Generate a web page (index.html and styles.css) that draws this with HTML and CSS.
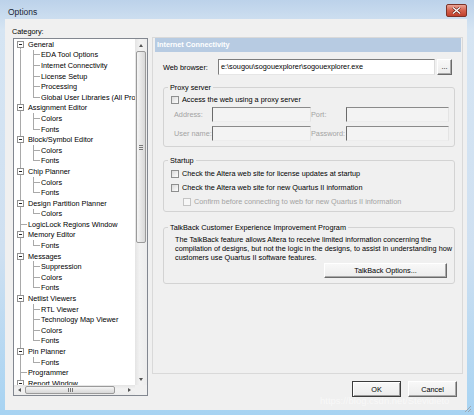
FILE: index.html
```html
<!DOCTYPE html>
<html lang="en">
<head>
  <meta charset="UTF-8">
  <title>Options</title>
  <link rel="stylesheet" href="styles.css">
</head>
<body>

  <div class="window">
    <div class="titlebar">
      <span class="title">Options</span>
      <span class="close">
        <svg width="9" height="7" viewBox="0 0 9 7"><path d="M1 0.5 L8 6.5 M8 0.5 L1 6.5" stroke="#5a1a10" stroke-width="2.4"/><path d="M1 0.5 L8 6.5 M8 0.5 L1 6.5" stroke="#fff" stroke-width="1.3"/></svg>
      </span>
    </div>

    <div class="client">
      <div class="left">
        <div class="cat-label">Category:</div>
        <div class="tree">
          <div class="tree-items">
            <div class="node root first"><span class="box"></span>General</div>
            <div class="node leaf">EDA Tool Options</div>
            <div class="node leaf">Internet Connectivity</div>
            <div class="node leaf">License Setup</div>
            <div class="node leaf">Processing</div>
            <div class="node leaf last">Global User Libraries (All Projects)</div>
            <div class="node root"><span class="box"></span>Assignment Editor</div>
            <div class="node leaf">Colors</div>
            <div class="node leaf last">Fonts</div>
            <div class="node root"><span class="box"></span>Block/Symbol Editor</div>
            <div class="node leaf">Colors</div>
            <div class="node leaf last">Fonts</div>
            <div class="node root"><span class="box"></span>Chip Planner</div>
            <div class="node leaf">Colors</div>
            <div class="node leaf last">Fonts</div>
            <div class="node root"><span class="box"></span>Design Partition Planner</div>
            <div class="node leaf last">Colors</div>
            <div class="node single">LogicLock Regions Window</div>
            <div class="node root"><span class="box"></span>Memory Editor</div>
            <div class="node leaf last">Fonts</div>
            <div class="node root"><span class="box"></span>Messages</div>
            <div class="node leaf">Suppression</div>
            <div class="node leaf">Colors</div>
            <div class="node leaf last">Fonts</div>
            <div class="node root"><span class="box"></span>Netlist Viewers</div>
            <div class="node leaf">RTL Viewer</div>
            <div class="node leaf">Technology Map Viewer</div>
            <div class="node leaf">Colors</div>
            <div class="node leaf last">Fonts</div>
            <div class="node root"><span class="box"></span>Pin Planner</div>
            <div class="node leaf last">Fonts</div>
            <div class="node single">Programmer</div>
            <div class="node root"><span class="box"></span>Report Window</div>
          </div>
          <div class="vscroll">
            <span class="arr"><i class="tri up"></i></span>
            <span class="thumb"><i class="grip"></i></span>
            <span class="track"></span>
            <span class="arr"><i class="tri down"></i></span>
          </div>
          <div class="hscroll">
            <span class="arr"><i class="tri lt"></i></span>
            <span class="thumb"><i class="grip"></i></span>
            <span class="track"></span>
            <span class="arr"><i class="tri rt"></i></span>
          </div>
          <div class="corner"></div>
        </div>
      </div>

      <div class="right">
        <div class="panel">
          <div class="panel-head">Internet Connectivity</div>
          <div class="panel-body">
            <div class="web-row">
              <span class="web-label">Web browser:</span>
              <span class="field">e:\sougou\sogouexplorer\sogouexplorer.exe</span>
              <button class="btn dots">...</button>
            </div>

            <fieldset class="group proxy">
              <legend>Proxy server</legend>
              <label class="check"><span class="cb"></span>Access the web using a proxy server</label>
              <div class="proxy-grid">
                <span class="off-text">Address:</span>
                <span class="field off"></span>
                <span class="off-text">Port:</span>
                <span class="field off"></span>
                <span class="off-text">User name:</span>
                <span class="field off"></span>
                <span class="off-text">Password:</span>
                <span class="field off"></span>
              </div>
            </fieldset>

            <fieldset class="group startup">
              <legend>Startup</legend>
              <label class="check"><span class="cb"></span>Check the Altera web site for license updates at startup</label>
              <label class="check"><span class="cb"></span>Check the Altera web site for new Quartus II information</label>
              <label class="check sub off-text"><span class="cb dim"></span>Confirm before connecting to web for new Quartus II information</label>
            </fieldset>

            <fieldset class="group talkback">
              <legend>TalkBack Customer Experience Improvement Program</legend>
              <p class="talk-text">The TalkBack feature allows Altera to receive limited information concerning the<br>compilation of designs, but not the logic in the designs, to assist in understanding how<br>customers use Quartus II software features.</p>
              <button class="btn talk-btn">TalkBack Options...</button>
            </fieldset>
          </div>
        </div>

        <div class="actions">
          <button class="btn default">OK</button>
          <button class="btn">Cancel</button>
        </div>
      </div>
    </div>

    <span class="watermark">https://blog.csdn.net/Stevidieto</span>
    <svg class="grip-corner" width="8" height="8" viewBox="0 0 8 8">
      <path d="M7 1 L1 7 M7 4 L4 7 M7 6.5 L6.5 7" stroke="#9aa6b2" stroke-width="1"/>
    </svg>
  </div>

</body>
</html>
```

FILE: styles.css
```css
body {
  margin: 0;
  font-family: "Liberation Sans", Arial, sans-serif;
  font-size: 7.3px;
  color: #000;
}
.window {
  position: relative;
  width: 474px;
  height: 415px;
  display: flex;
  flex-direction: column;
  overflow: hidden;
  background: linear-gradient(#bcd2ea, #d6e5f3 30px, #cfe0f1 60%, #a7d3f2);
}
.titlebar {
  height: 19px;
  display: flex;
  align-items: center;
  justify-content: space-between;
  padding: 0 7px 0 8px;
}
.title {
  font-size: 8.5px;
  color: #1b2635;
  padding-top: 5px;
}
.close {
  width: 19px;
  height: 11px;
  display: flex;
  align-items: center;
  justify-content: center;
  margin-top: 2px;
  border: 1px solid #7c3328;
  border-radius: 2px;
  background: linear-gradient(#eaa597, #d5614c 50%, #c0402c);
}

.client {
  flex: 1;
  margin: 0 7px 5px 5px;
  padding: 8px 4px 0 7px;
  background: #f0f0f0;
  display: grid;
  grid-template-columns: 136px 311px;
  column-gap: 4px;
}

/* category tree */
.cat-label {
  line-height: 9px;
  margin-bottom: 2px;
}
.tree {
  margin-left: 1px;
  height: 358px;
  box-sizing: border-box;
  border: 1px solid #828790;
  background: #fff;
  display: grid;
  grid-template-columns: 1fr 12px;
  grid-template-rows: 1fr 10px;
  overflow: hidden;
}
.tree-items {
  overflow: hidden;
  min-width: 0;
  color: #000;
}
.node {
  --ln: #a9a9a9;
  height: 10.6px;
  display: flex;
  align-items: center;
  white-space: nowrap;
  background-image: linear-gradient(var(--ln), var(--ln));
  background-repeat: no-repeat;
  background-position: 6px 0;
  background-size: 1px 100%;
}
.root {
  padding-left: 3px;
}
.root.first {
  background-position: 6px 100%;
  background-size: 1px 50%;
}
.box {
  width: 7px;
  height: 7px;
  box-sizing: border-box;
  margin-right: 4px;
  border: 1px solid #919191;
  background: linear-gradient(#222, #222) center / 3px 1px no-repeat, #fff;
}
.leaf {
  padding-left: 27px;
  background-image: linear-gradient(var(--ln), var(--ln)), linear-gradient(var(--ln), var(--ln)), linear-gradient(var(--ln), var(--ln));
  background-position: 6px 0, 19px 0, 19px 50%;
  background-size: 1px 100%, 1px 100%, 7px 1px;
}
.leaf.last {
  background-size: 1px 100%, 1px 50%, 7px 1px;
}
.single {
  padding-left: 14px;
  background-image: linear-gradient(var(--ln), var(--ln)), linear-gradient(var(--ln), var(--ln));
  background-position: 6px 0, 6px 50%;
  background-size: 1px 100%, 7px 1px;
}

/* scroll bars */
.vscroll, .hscroll {
  display: flex;
  background: #ececec;
}
.vscroll {
  flex-direction: column;
  background: linear-gradient(to right, #e4e4e4, #f2f2f2 40%, #ececec);
}
.hscroll {
  background: linear-gradient(#e4e4e4, #f2f2f2 40%, #ececec);
}
.arr {
  flex: 0 0 12px;
  display: flex;
  align-items: center;
  justify-content: center;
}
.hscroll .arr {
  flex-basis: 11px;
}
.tri {
  width: 0;
  height: 0;
  border: 2.5px solid transparent;
}
.tri.up { border-bottom: 3px solid #555; border-top-width: 0; }
.tri.down { border-top: 3px solid #555; border-bottom-width: 0; }
.tri.lt { border-right: 3px solid #555; border-left-width: 0; }
.tri.rt { border-left: 3px solid #555; border-right-width: 0; }
.thumb {
  display: flex;
  align-items: center;
  justify-content: center;
  box-sizing: border-box;
  border: 1px solid #9a9a9a;
  border-radius: 2px;
}
.vscroll .thumb {
  flex: 0 0 192px;
  margin: 0 1px;
  background: linear-gradient(to right, #f5f5f5, #e6e6e6 50%, #d8d8d8);
}
.hscroll .thumb {
  flex: 0 0 90px;
  margin: 1px 0;
  background: linear-gradient(#f5f5f5, #e6e6e6 50%, #d8d8d8);
}
.track {
  flex: 1;
}
.vscroll .grip {
  width: 4px;
  height: 5px;
  background: repeating-linear-gradient(#777 0 1px, transparent 1px 2px);
}
.hscroll .grip {
  width: 5px;
  height: 4px;
  background: repeating-linear-gradient(to right, #777 0 1px, transparent 1px 2px);
}
.corner {
  background: #f0f0f0;
}

/* settings panel */
.right {
  display: flex;
  flex-direction: column;
}
.panel {
  margin-top: 10px;
  height: 337px;
  box-sizing: border-box;
  border: 1px solid #d9d9d9;
  padding: 0 1px 0 2px;
}
.panel-head {
  height: 14px;
  line-height: 14px;
  padding-left: 2px;
  background: #b7cbe2;
  color: #fff;
  font-weight: bold;
}
.panel-body {
  padding: 7px 6px 0 8px;
}
.web-row {
  display: flex;
  align-items: center;
  height: 16px;
  margin-right: 3px;
}
.web-label {
  width: 55px;
}
.field {
  display: block;
  height: 15px;
  line-height: 13px;
  box-sizing: border-box;
  padding-left: 2px;
  background: #fff;
  border: 1px solid;
  border-color: #7d7d7d #dcdcdc #e6e6e6 #7d7d7d;
  white-space: nowrap;
  overflow: hidden;
}
.web-row .field {
  flex: 1;
  height: 16px;
}
.field.off {
  background: #f3f3f3;
  border-color: #8a8a8a #e4e4e4 #ececec #6a6a6a;
}
.off-text {
  color: #a3a3a3;
  white-space: nowrap;
}

.btn {
  font: inherit;
  color: #000;
  padding: 0;
  height: 16px;
  box-sizing: border-box;
  border: 1px solid;
  border-color: #fff #6a6a6a #6a6a6a #fff;
  box-shadow: inset -1px -1px #a9a9a9;
  background: linear-gradient(#f8f8f8, #ececec);
}
.dots {
  width: 15px;
  margin-left: 2px;
  line-height: 10px;
}

.group {
  margin: 8px 0 0;
  padding: 3px 5px 5px 7px;
  border: 1px solid #d3d3d3;
  border-radius: 3px;
  min-width: 0;
}
.group legend {
  padding: 0 2px;
  margin-left: -3px;
  line-height: 9px;
}
.check {
  display: flex;
  align-items: center;
  height: 9px;
  white-space: nowrap;
}
.cb {
  width: 8px;
  height: 8px;
  box-sizing: border-box;
  margin-right: 3px;
  border: 1px solid #8e8f8f;
  background: linear-gradient(135deg, #dadada, #fdfdfd);
}
.cb.dim {
  border-color: #c4c4c4;
  background: #f7f7f7;
}
.proxy-grid {
  display: grid;
  grid-template-columns: 38px 99px 35px 1fr;
  row-gap: 4px;
  align-items: center;
  margin: 3px 0 0 3px;
}
.startup {
  margin-top: 9px;
  padding-top: 4px;
}
.startup .check + .check {
  margin-top: 5px;
}
.check.sub {
  padding-left: 12px;
}
.talkback {
  margin-top: 11px;
  padding-top: 3px;
}
.talk-text {
  margin: 0 0 0 4px;
  line-height: 9px;
  white-space: nowrap;
}
.talk-btn {
  display: block;
  width: 123px;
  height: 15px;
  margin: 1px 2px 0 auto;
}

.actions {
  display: flex;
  justify-content: flex-end;
  gap: 7px;
  margin-top: 7px;
  padding-right: 6px;
}
.actions .btn {
  width: 49px;
}
.btn.default {
  border-color: #3c3c3c;
  box-shadow: inset 1px 1px #fff, inset -1px -1px #9a9a9a;
}

.watermark {
  position: absolute;
  left: 320px;
  top: 395px;
  font-size: 9.5px;
  color: rgba(255, 255, 255, 0.55);
}
.grip-corner {
  position: absolute;
  right: 2px;
  bottom: 2px;
}
```
